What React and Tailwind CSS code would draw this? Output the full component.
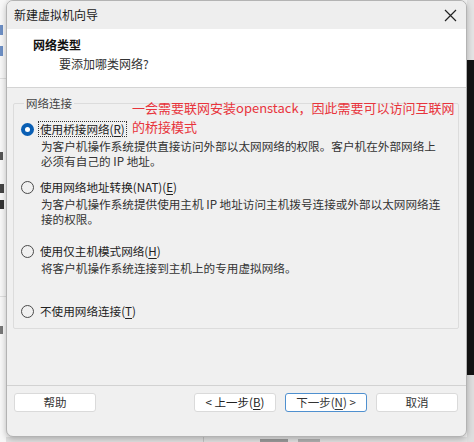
import React from "react";

const font = { fontFamily: '"Noto Sans CJK SC", "Noto Sans", sans-serif' };

function Radio({ checked }) {
  if (checked) {
    return (
      <span className="w-[13px] h-[13px] rounded-full bg-[#0a5fb4] flex items-center justify-center shrink-0">
        <span className="w-[5px] h-[5px] rounded-full bg-white" />
      </span>
    );
  }
  return <span className="w-[13px] h-[13px] rounded-full border border-[#4a4a4a] shrink-0 box-border" />;
}

function U({ children }) {
  return <span className="underline underline-offset-[2px] decoration-[1px]">{children}</span>;
}

function Option({ checked, label, desc, className = "", focus = false }) {
  return (
    <div className={className}>
      <div className="flex items-center h-[16px]">
        <Radio checked={checked} />
        <span
          className={
            "ml-[4px] px-[1px] leading-[14px] text-[11.6px] text-[#222] " +
            (focus ? "border border-dotted border-[#333]" : "border border-transparent")
          }
        >
          {label}
        </span>
      </div>
      {desc && (
        <div className="ml-[20px] mt-[2px] text-[11.6px] leading-[15px] text-[#333] tracking-[0.02px]">
          {desc}
        </div>
      )}
    </div>
  );
}

function Button({ children, primary }) {
  return (
    <div
      className={
        "w-[82px] h-[19px] rounded-[3px] bg-white flex items-center justify-center text-[11.5px] text-[#333] border " +
        (primary ? "border-[#4f90cf]" : "border-[#dadada]")
      }
    >
      {children}
    </div>
  );
}

export default function App() {
  return (
    <div className="w-[474px] h-[442px] overflow-hidden bg-[#f4f4f4] flex" style={font}>
      {/* left desktop strip */}
      <div className="w-[6px] shrink-0 bg-[#f7f7f7] flex flex-col">
        <div className="h-[25px]" />
        <div className="w-[3px] h-[10px] bg-[#6d8fc4]" />
        <div className="w-[3px] h-[10px] bg-[#6d8fc4] mt-[11px]" />
        <div className="h-[1px] bg-[#dedede] mt-[22px]" />
        <div className="w-[3px] h-[8px] bg-[#555] mt-[73px]" />
        <div className="w-[4px] h-[9px] bg-[#444] mt-[24px]" />
        <div className="w-[4px] h-[9px] bg-[#333] mt-[7px]" />
        <div className="h-[1px] bg-[#dedede] mt-[87px]" />
        <div className="w-[3px] h-[8px] bg-[#777] mt-[29px]" />
      </div>

      {/* dialog + bottom strip */}
      <div className="w-[461px] shrink-0 flex flex-col">
        <div className="relative z-10 h-[437px] rounded-[7px] border border-[#b3b3b3] bg-[#f0f0f0] shadow-[0_2px_6px_rgba(0,0,0,0.25)] overflow-hidden flex flex-col">
          {/* title bar */}
          <div className="h-[28px] bg-[#eeeeee] flex items-center justify-between pl-[7px] pr-[9px] shrink-0">
            <span className="text-[12px] text-[#1a1a1a]">新建虚拟机向导</span>
            <svg width="13" height="13" viewBox="0 0 13 13" className="mt-[1px]">
              <path d="M1 1 L12 12 M12 1 L1 12" stroke="#222" strokeWidth="1.2" />
            </svg>
          </div>
          {/* header */}
          <div className="h-[59px] bg-white border-b border-[#d4d4d4] pl-[26px] pt-[8px] shrink-0">
            <div className="text-[12px] leading-[16px] font-bold text-[#111]">网络类型</div>
            <div className="ml-[26px] mt-[3px] text-[12px] leading-[16px] text-[#333]">要添加哪类网络?</div>
          </div>
          {/* body */}
          <div className="relative flex-1 px-[6px] pr-[7px] pt-[7px]">
            <fieldset className="border border-[#dcdcdc] rounded-[2px] px-[7px] pt-[10px] pb-[11px] h-[234px] box-border">
              <legend className="ml-[3px] px-[2px] text-[11.5px] leading-[16px] text-[#444]">网络连接</legend>
              <Option
                checked
                focus
                label={<>使用桥接网络(<U>R</U>)</>}
                desc={
                  <>
                    为客户机操作系统提供直接访问外部以太网网络的权限。客户机在外部网络上
                    <br />
                    必须有自己的 IP 地址。
                  </>
                }
              />
              <Option
                className="mt-[10px]"
                label={<>使用网络地址转换(NAT)(<U>E</U>)</>}
                desc={
                  <>
                    为客户机操作系统提供使用主机 IP 地址访问主机拨号连接或外部以太网网络连
                    <br />
                    接的权限。
                  </>
                }
              />
              <Option
                className="mt-[16px]"
                label={<>使用仅主机模式网络(<U>H</U>)</>}
                desc={<>将客户机操作系统连接到主机上的专用虚拟网络。</>}
              />
              <Option className="mt-[27px]" label={<>不使用网络连接(<U>T</U>)</>} />
            </fieldset>
            {/* annotation overlay */}
            <div className="absolute left-[125px] top-[10px] flex flex-col items-start text-[13px] leading-[19px] text-[#e8343c]">
              <span className="whitespace-nowrap">一会需要联网安装openstack，因此需要可以访问互联网</span>
              <span className="whitespace-nowrap">的桥接模式</span>
            </div>
          </div>
          {/* footer */}
          <div className="h-[51px] border-t border-[#d2d2d2] shrink-0 flex items-start justify-between pt-[7px] pl-[7px] pr-[8px]">
            <Button>帮助</Button>
            <div className="flex gap-[9px]">
              <Button>
                <span className="text-[#222]">&lt; 上一步(<U>B</U>)</span>
              </Button>
              <Button primary>
                下一步(<U>N</U>) &gt;
              </Button>
              <Button>取消</Button>
            </div>
          </div>
        </div>
        <div className="flex-1 bg-[#e2e2e2] flex items-end">
          <div className="w-[198px] h-full border-r border-[#c4c4c4]" />
          <div className="ml-[56px] w-[28px] h-[3px] bg-[#9a9a9a]" />
          <div className="ml-[10px] w-[22px] h-[3px] bg-[#b0b0b0]" />
        </div>
      </div>

      {/* right desktop strip */}
      <div className="flex-1 flex flex-col">
        <div className="h-[60px] bg-[#e4e4e4]" />
        <div className="h-[315px] bg-[#141414]" />
        <div className="flex-1 bg-[#dedede]" />
      </div>
    </div>
  );
}
